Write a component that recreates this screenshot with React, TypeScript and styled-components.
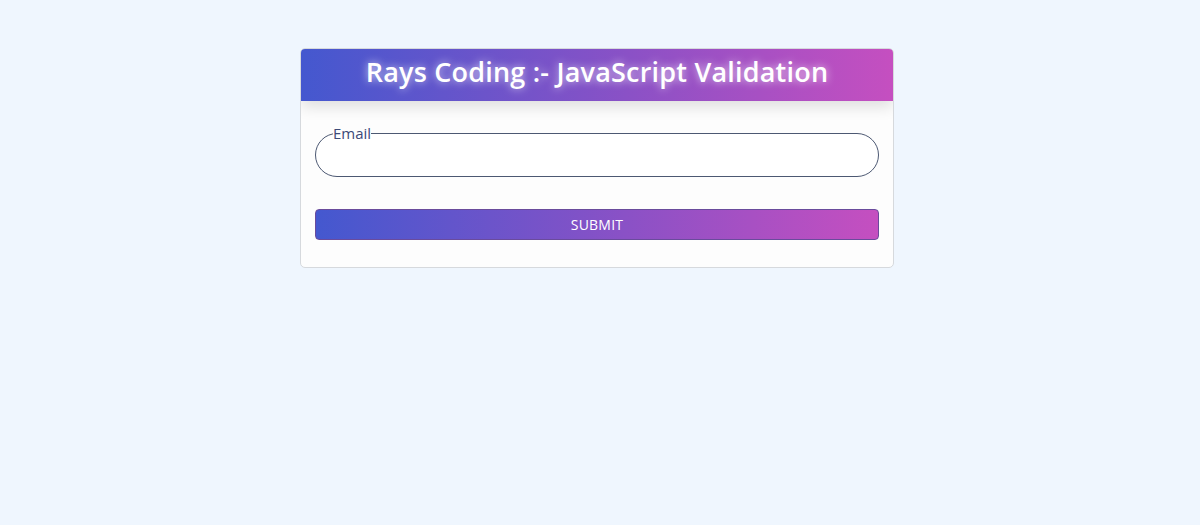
import React from "react";
import styled, { createGlobalStyle } from "styled-components";

const Global = createGlobalStyle`
  html, body { margin: 0; padding: 0; }
  body {
    background: #eff6fe;
    font-family: "Open Sans", "Noto Sans", sans-serif;
    min-height: 525px;
  }
`;

const Page = styled.div`
  display: flex;
  justify-content: center;
  padding-top: 48px;
  padding-right: 6px;
`;

const Card = styled.div`
  width: 594px;
  box-sizing: border-box;
  background: #fdfdfd;
  border: 1px solid #d6d9dd;
  border-radius: 5px;
  overflow: hidden;
`;

const Header = styled.div`
  height: 52px;
  box-sizing: border-box;
  padding-bottom: 8px;
  display: flex;
  align-items: center;
  justify-content: center;
  background: linear-gradient(90deg, #4458cf 0%, #8a51c6 55%, #c54fc0 100%);
  box-shadow: 0 6px 14px rgba(0, 0, 0, 0.12);
  position: relative;
`;

const Title = styled.h1`
  margin: 0;
  color: #fff;
  font-family: "Open Sans", "Noto Sans", sans-serif;
  font-weight: 600;
  font-size: 27px;
  letter-spacing: 0.2px;
  text-shadow: 0 0 8px rgba(255, 255, 255, 0.75);
`;

const Body = styled.form`
  display: flex;
  flex-direction: column;
  gap: 32px;
  padding: 22px 14px 27px;
`;

const Field = styled.fieldset`
  margin: 0;
  padding: 0 14px;
  height: 54px;
  box-sizing: border-box;
  border: 1px solid #4c5872;
  border-radius: 23px;
  background: #fff;
  display: flex;
  align-items: center;
`;

const Legend = styled.legend`
  padding: 0;
  margin-left: 3px;
  font-size: 15px;
  color: #3c4a78;
  font-family: "Open Sans", "Noto Sans", sans-serif;
`;

const Input = styled.input`
  flex: 1;
  border: none;
  outline: none;
  background: transparent;
  font-size: 15px;
  height: 30px;
`;

const Button = styled.button`
  height: 31px;
  border: 1px solid #6a4b9c;
  border-radius: 4px;
  background: linear-gradient(90deg, #4458cf 0%, #8a51c6 55%, #c54fc0 100%);
  color: #fff;
  font-family: "Open Sans", "Noto Sans", sans-serif;
  font-size: 14px;
  letter-spacing: 0.2px;
  cursor: pointer;
`;

export default function App() {
  return (
    <>
      <Global />
      <Page>
        <Card>
          <Header>
            <Title>Rays Coding :- JavaScript Validation</Title>
          </Header>
          <Body onSubmit={(e) => e.preventDefault()}>
            <Field>
              <Legend>Email</Legend>
              <Input type="email" />
            </Field>
            <Button type="submit">SUBMIT</Button>
          </Body>
        </Card>
      </Page>
    </>
  );
}
